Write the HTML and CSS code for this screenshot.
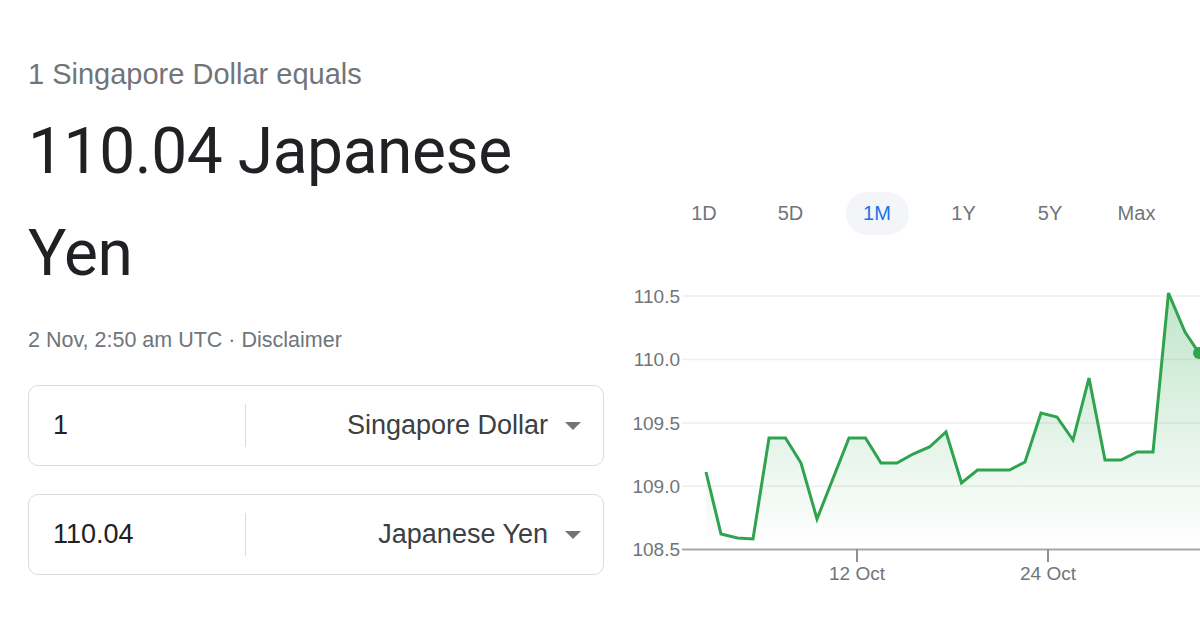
FILE: index.html
```html
<!DOCTYPE html>
<html lang="en">
<head>
  <meta charset="UTF-8" />
  <title>SGD to JPY</title>
  <link rel="stylesheet" href="styles.css">
</head>
<body>
  <div class="page">
    <div class="summary">
      <div class="equals">1 Singapore Dollar equals</div>
      <div class="headline">110.04 Japanese Yen</div>
      <div class="updated">2 Nov, 2:50 am UTC · <span class="disclaimer">Disclaimer</span></div>

      <div class="converter">
        <div class="conv-row">
          <div class="amount">1</div>
          <div class="divider"></div>
          <div class="currency">
            <span>Singapore Dollar</span>
            <span class="caret"></span>
          </div>
        </div>
        <div class="conv-row">
          <div class="amount">110.04</div>
          <div class="divider"></div>
          <div class="currency">
            <span>Japanese Yen</span>
            <span class="caret"></span>
          </div>
        </div>
      </div>
    </div>

    <div class="chart-col">
      <div class="ranges">
        <button>1D</button>
        <button>5D</button>
        <button class="active">1M</button>
        <button>1Y</button>
        <button>5Y</button>
        <button>Max</button>
      </div>

      <svg class="chart" width="580" height="330" viewBox="620 270 580 330">
        <defs>
          <linearGradient id="fade" gradientUnits="userSpaceOnUse" x1="0" y1="294" x2="0" y2="549">
            <stop offset="0" stop-color="#34a853" stop-opacity="0.3" />
            <stop offset="1" stop-color="#34a853" stop-opacity="0" />
          </linearGradient>
        </defs>

        <!-- grid -->
        <line class="grid" x1="682" y1="296" x2="1200" y2="296" />
        <line class="grid" x1="682" y1="359.5" x2="1200" y2="359.5" />
        <line class="grid" x1="682" y1="423" x2="1200" y2="423" />
        <line class="grid" x1="682" y1="486.3" x2="1200" y2="486.3" />

        <text class="axis-label" x="680" y="302.5" text-anchor="end">110.5</text>
        <text class="axis-label" x="680" y="366" text-anchor="end">110.0</text>
        <text class="axis-label" x="680" y="429.5" text-anchor="end">109.5</text>
        <text class="axis-label" x="680" y="493" text-anchor="end">109.0</text>
        <text class="axis-label" x="680" y="556" text-anchor="end">108.5</text>

        <!-- area + line -->
        <polygon fill="url(#fade)" points="706,549 706,472 721,534 737.5,538 753,539 769,438 785.5,438 801,463 817,519 849,438 865.5,438 881,463 897,463 913,454 929.5,447 946,432 961.5,483 977.5,470 993.5,470 1009.5,470 1025,462 1041,413 1057,417 1073,440 1089,378 1105,460 1121,460 1137,452 1153,452 1168.5,293 1185,332 1199,353 1200,353 1200,549" />
        <polyline class="line" points="706,472 721,534 737.5,538 753,539 769,438 785.5,438 801,463 817,519 849,438 865.5,438 881,463 897,463 913,454 929.5,447 946,432 961.5,483 977.5,470 993.5,470 1009.5,470 1025,462 1041,413 1057,417 1073,440 1089,378 1105,460 1121,460 1137,452 1153,452 1168.5,293 1185,332 1199,353" />
        <circle cx="1199" cy="353" r="6" fill="#2fa34e" />

        <!-- x axis -->
        <line class="axis" x1="682" y1="549.5" x2="1200" y2="549.5" />
        <line class="tick" x1="857" y1="549" x2="857" y2="562" />
        <line class="tick" x1="1048" y1="549" x2="1048" y2="562" />
        <text class="axis-label" x="857" y="580" text-anchor="middle">12 Oct</text>
        <text class="axis-label" x="1048" y="580" text-anchor="middle">24 Oct</text>
      </svg>
    </div>
  </div>
</body>
</html>
```

FILE: styles.css
```css
html, body {
  margin: 0;
  background: #fff;
  overflow: hidden;
}

body {
  font-family: "Liberation Sans", Arial, sans-serif;
  color: #202124;
  width: 1200px;
  height: 630px;
}

.page {
  display: flex;
  align-items: flex-start;
  gap: 16px;
  padding-left: 28px;
}

.summary {
  width: 576px;
  flex-shrink: 0;
  padding-top: 57px;
}

.equals {
  font-size: 29px;
  line-height: 34px;
  color: #70757a;
}

.headline {
  margin-top: 10px;
  font-family: Roboto, "Liberation Sans", sans-serif;
  font-size: 64px;
  line-height: 102px;
  letter-spacing: -0.4px;
  color: #202124;
  width: 540px;
}

.updated {
  margin-top: 22px;
  font-size: 21.5px;
  line-height: 26px;
  color: #70757a;
}

.converter {
  margin-top: 32px;
  display: flex;
  flex-direction: column;
  gap: 28px;
}

.conv-row {
  display: flex;
  align-items: center;
  height: 81px;
  box-sizing: border-box;
  border: 1px solid #d8dbdf;
  border-radius: 10px;
  font-size: 27px;
}

.amount {
  width: 192px;
  padding-left: 24px;
  color: #202124;
}

.divider {
  width: 1px;
  height: 43px;
  background: #dadce0;
}

.currency {
  flex: 1;
  display: flex;
  align-items: center;
  justify-content: flex-end;
  gap: 17px;
  padding-right: 22px;
  color: #3c4043;
}

.caret {
  width: 0;
  height: 0;
  border-left: 8.5px solid transparent;
  border-right: 8.5px solid transparent;
  border-top: 8px solid #70757a;
}

.chart-col {
  flex: 1;
  padding-top: 192px;
}

.ranges {
  display: flex;
  gap: 23.5px;
  padding-left: 52.5px;
}

.ranges button {
  width: 63px;
  height: 43px;
  border: none;
  border-radius: 22px;
  background: none;
  font-family: "Liberation Sans", Arial, sans-serif;
  font-size: 20px;
  color: #70757a;
  padding: 0;
}

.ranges button.active {
  background: #f3f5f8;
  color: #1a73e8;
}

.chart {
  display: block;
  margin-top: 35px;
}

.grid {
  stroke: #eeeeee;
  stroke-width: 1.5;
}

.axis {
  stroke: #a5a8ab;
  stroke-width: 2;
}

.tick {
  stroke: #8d9094;
  stroke-width: 2;
}

.line {
  fill: none;
  stroke: #2fa34e;
  stroke-width: 3;
  stroke-linejoin: miter;
}

.axis-label {
  font-family: "Liberation Sans", Arial, sans-serif;
  font-size: 19px;
  fill: #70757a;
}
```
